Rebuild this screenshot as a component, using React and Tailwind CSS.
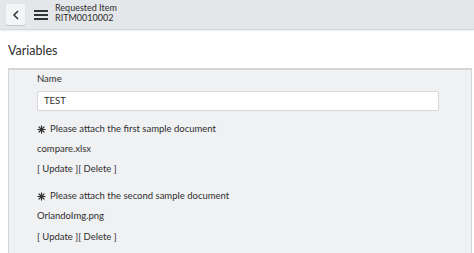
function Required() {
  return (
    <svg width="9" height="9" viewBox="0 0 10 10" stroke="#333" strokeWidth="1.3" strokeLinecap="round">
      <path d="M5 1 V9 M1 5 H9 M2.2 2.2 L7.8 7.8 M7.8 2.2 L2.2 7.8" />
    </svg>
  );
}

export default function App() {
  return (
    <div className="w-[474px] h-[253px] overflow-hidden bg-white text-[#2e2e2e] font-['Lato',sans-serif]">
      {/* top bar */}
      <div className="h-[30px] flex items-center bg-[#e4e7ea] border-b border-[#d6d9dc] shadow-[0_1px_2px_rgba(0,0,0,0.08)]">
        <button className="ml-[6px] w-[19px] h-[21px] flex items-center justify-center bg-[#f4f5f6] rounded-[2px] shadow-[0_1px_1px_rgba(0,0,0,0.15)]">
          <svg width="8" height="10" viewBox="0 0 8 10" fill="none" stroke="#333" strokeWidth="1.5">
            <path d="M6 1 L2 5 L6 9" />
          </svg>
        </button>
        <svg className="ml-[9px]" width="14" height="10" viewBox="0 0 14 10" fill="#333">
          <rect x="0" y="0" width="14" height="2" />
          <rect x="0" y="4" width="14" height="2" />
          <rect x="0" y="8" width="14" height="2" />
        </svg>
        <div className="ml-[7px] flex flex-col leading-[10px] text-[9px] pb-[3px]">
          <span>Requested Item</span>
          <span>RITM0010002</span>
        </div>
      </div>

      <div className="pt-[13px] px-[8px] text-[12.5px] leading-[16px]">Variables</div>

      <div className="mt-[9px] ml-[8px] mr-[2px] h-[190px] bg-[#f0f1f3] border-t-2 border-l border-r border-[#d3d5d8] pl-[28px] pr-[32px] pt-[3px] text-[9.5px]">
        <div className="leading-[12px]">Name</div>
        <div className="mt-[6px] h-[20px] bg-white border border-[#d6d8db] rounded-[2px] flex items-center px-[6px]">TEST</div>

        <div className="mt-[12px] flex items-center gap-[4px] leading-[12px]">
          <Required />
          <span>Please attach the first sample document</span>
        </div>
        <div className="mt-[8px] leading-[12px]">compare.xlsx</div>
        <div className="mt-[8px] leading-[12px]">[ Update ][ Delete ]</div>

        <div className="mt-[15px] flex items-center gap-[4px] leading-[12px]">
          <Required />
          <span>Please attach the second sample document</span>
        </div>
        <div className="mt-[8px] leading-[12px]">OrlandoImg.png</div>
        <div className="mt-[9px] leading-[12px]">[ Update ][ Delete ]</div>
      </div>
    </div>
  );
}
